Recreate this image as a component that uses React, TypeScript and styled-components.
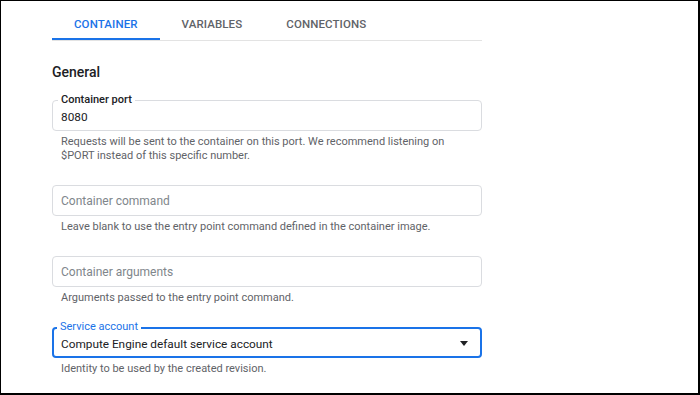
import * as React from 'react';
import styled, { createGlobalStyle } from 'styled-components';

const GlobalStyle = createGlobalStyle`
    html, body {
        margin: 0;
        padding: 0;
        background: #ffffff;
    }
    body {
        font-family: Roboto, 'Noto Sans', Arial, sans-serif;
        color: #202124;
    }
`;

const Frame = styled.div`
    box-sizing: border-box;
    width: 700px;
    height: 395px;
    border-style: solid;
    border-color: #000000;
    border-width: 1px 2px 2px 1px;
    background: #ffffff;
    overflow: hidden;
`;

const Content = styled.div`
    width: 430px;
    margin-left: 51px;
`;

const TabBar = styled.div`
    display: flex;
    height: 39px;
    border-bottom: 1px solid #e3e3e3;
`;

const Tab = styled.div<{ active?: boolean }>`
    display: flex;
    align-items: center;
    padding: 6px 22px 0;
    font-size: 11.5px;
    font-weight: 500;
    letter-spacing: 0.1px;
    text-transform: uppercase;
    color: ${(p) => (p.active ? '#1a73e8' : '#5f6368')};
    box-shadow: ${(p) => (p.active ? 'inset 0 -2px 0 #1a73e8' : 'none')};
`;

const SectionTitle = styled.h2`
    margin: 21px 0 18px;
    font-size: 14px;
    line-height: 20px;
    font-weight: 500;
    color: #202124;
`;

const FieldGroup = styled.div`
    margin-bottom: 22px;
`;

const Box = styled.div<{ focused?: boolean }>`
    position: relative;
    box-sizing: border-box;
    height: 31px;
    display: flex;
    align-items: center;
    padding: 0 ${(p) => (p.focused ? '7px' : '8px')};
    border: ${(p) => (p.focused ? '2px solid #1a73e8' : '1px solid #dadce0')};
    border-radius: 4px;
`;

const FloatingLabel = styled.span<{ focused?: boolean }>`
    position: absolute;
    top: ${(p) => (p.focused ? '-9px' : '-8px')};
    left: ${(p) => (p.focused ? '3px' : '5px')};
    padding: 0 3px;
    background: #ffffff;
    font-size: 11px;
    line-height: 14px;
    font-weight: ${(p) => (p.focused ? 400 : 500)};
    color: ${(p) => (p.focused ? '#1a73e8' : '#202124')};
`;

const Value = styled.span<{ placeholder?: boolean }>`
    flex: 1;
    font-size: ${(p) => (p.placeholder ? '12px' : '11.8px')};
    color: ${(p) => (p.placeholder ? '#80868b' : '#202124')};
    padding-top: ${(p) => (p.placeholder ? '0' : '2px')};
`;

const Caret = styled.span`
    width: 0;
    height: 0;
    margin-right: 5px;
    margin-top: 1px;
    border-left: 4.5px solid transparent;
    border-right: 4.5px solid transparent;
    border-top: 5px solid #202124;
`;

const Hint = styled.p`
    margin: 4px 0 0;
    padding: 0 9px;
    font-size: 11px;
    line-height: 14px;
    color: #5f6368;
`;

type FieldProps = {
    label: string;
    value?: string;
    hint: string;
    focused?: boolean;
    select?: boolean;
};

const Field: React.FC<FieldProps> = ({ label, value, hint, focused, select }) => (
    <FieldGroup>
        <Box focused={focused}>
            {value && <FloatingLabel focused={focused}>{label}</FloatingLabel>}
            <Value placeholder={!value}>{value || label}</Value>
            {select && <Caret />}
        </Box>
        <Hint>{hint}</Hint>
    </FieldGroup>
);

export default function App() {
    return (
        <>
            <GlobalStyle />
            <Frame>
                <Content>
                    <TabBar>
                        <Tab active>Container</Tab>
                        <Tab>Variables</Tab>
                        <Tab>Connections</Tab>
                    </TabBar>
                    <SectionTitle>General</SectionTitle>
                    <Field
                        label="Container port"
                        value="8080"
                        hint="Requests will be sent to the container on this port. We recommend listening on $PORT instead of this specific number."
                    />
                    <Field
                        label="Container command"
                        hint="Leave blank to use the entry point command defined in the container image."
                    />
                    <Field label="Container arguments" hint="Arguments passed to the entry point command." />
                    <Field
                        label="Service account"
                        value="Compute Engine default service account"
                        hint="Identity to be used by the created revision."
                        focused
                        select
                    />
                </Content>
            </Frame>
        </>
    );
}
